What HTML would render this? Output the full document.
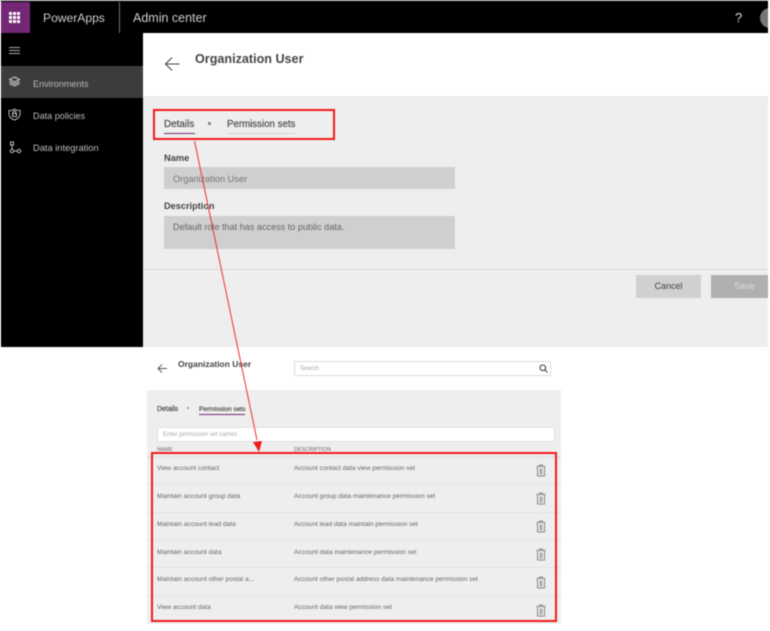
<!DOCTYPE html>
<html>
<head>
<meta charset="utf-8">
<style>
html,body{margin:0;padding:0;background:#fff;}
body{width:770px;height:631px;position:relative;overflow:hidden;font-family:"Liberation Sans",sans-serif;}
.a{position:absolute;white-space:nowrap;}
#wrap{position:absolute;left:0;top:0;width:770px;height:631px;filter:blur(0.5px);}
.row{position:absolute;left:157px;font-size:6.6px;color:#666;line-height:10px;}
.line{position:absolute;left:147px;width:414px;height:1px;background:#e2e2e2;}
.semi{-webkit-text-stroke:0.25px currentColor;}
</style>
</head>
<body>
<div id="wrap">
<!-- upper app -->
<div class="a" style="left:0;top:0;width:768px;height:1px;background:#aaa"></div>
<div class="a" style="left:1px;top:1px;width:767px;height:32px;background:#000"></div>
<div class="a" style="left:1px;top:2px;width:29px;height:31px;background:#742774"></div>
<svg class="a" style="left:9px;top:12px" width="12" height="12" fill="#fff">
<rect x="0" y="0" width="3" height="3"/><rect x="4" y="0" width="3" height="3"/><rect x="8" y="0" width="3" height="3"/>
<rect x="0" y="4" width="3" height="3"/><rect x="4" y="4" width="3" height="3"/><rect x="8" y="4" width="3" height="3"/>
<rect x="0" y="8" width="3" height="3"/><rect x="4" y="8" width="3" height="3"/><rect x="8" y="8" width="3" height="3"/>
</svg>
<div class="a" style="left:43px;top:10px;font-size:12.1px;line-height:16px;color:#ccc">PowerApps</div>
<div class="a" style="left:119px;top:2px;width:1px;height:31px;background:#777"></div>
<div class="a" style="left:133px;top:10px;font-size:12.5px;line-height:16px;color:#ccc">Admin center</div>
<div class="a" style="left:735px;top:10px;font-size:13px;line-height:16px;color:#ddd">?</div>
<div class="a" style="left:760px;top:8px;width:8px;height:20px;overflow:hidden"><div style="width:20px;height:20px;border-radius:50%;background:#777"></div></div>

<div class="a" style="left:1px;top:33px;width:142px;height:314px;background:#000"></div>
<div class="a" style="left:1px;top:66px;width:142px;height:32px;background:#3c3c3c"></div>
<svg class="a" style="left:9px;top:46px" width="12" height="9" stroke="#aaa" stroke-width="1" fill="none"><path d="M0 1.5H11M0 4.5H11M0 7.5H11"/></svg>
<svg class="a" style="left:8px;top:76px" width="13" height="12" stroke="#ccc" stroke-width="1" fill="none"><path d="M6.5 1L11.5 3.5L6.5 6L1.5 3.5Z"/><path d="M1.5 5.5L6.5 8L11.5 5.5"/><path d="M1.5 7.5L6.5 10L11.5 7.5"/></svg>
<svg class="a" style="left:8px;top:108px" width="13" height="13" stroke="#bbb" stroke-width="1" fill="none"><path d="M6.5 1C8 2 10 2.5 12 2.5V6C12 9 9.5 11 6.5 12C3.5 11 1 9 1 6V2.5C3 2.5 5 2 6.5 1Z"/><rect x="4.5" y="5.5" width="4" height="3"/><path d="M5 5.5V4.5A1.5 1.5 0 0 1 8 4.5V5.5"/></svg>
<svg class="a" style="left:9px;top:141px" width="13" height="13" stroke="#bbb" stroke-width="1" fill="none"><rect x="1.5" y="1" width="3" height="3"/><circle cx="3" cy="10" r="1.7"/><circle cx="10" cy="10" r="1.7"/><path d="M3 4V8.3M4.7 10H8.3"/></svg>
<div class="a" style="left:33px;top:78px;font-size:9.1px;line-height:12px;color:#bbb">Environments</div>
<div class="a" style="left:33px;top:110px;font-size:9.1px;line-height:12px;color:#bbb">Data policies</div>
<div class="a" style="left:33px;top:142px;font-size:9.3px;line-height:12px;color:#bbb">Data integration</div>

<div class="a" style="left:143px;top:33px;width:625px;height:63px;background:#fff"></div>
<div class="a" style="left:143px;top:96px;width:625px;height:251px;background:#eee"></div>
<svg class="a" style="left:164px;top:56px" width="17" height="16" stroke="#444" stroke-width="1.1" fill="none"><path d="M15.5 8H1.5M8 1.5L1.5 8L8 14.5"/></svg>
<div class="a" style="left:195px;top:50.5px;font-size:12.6px;line-height:16px;font-weight:bold;color:#444">Organization User</div>

<div class="a semi" style="left:164px;top:118px;font-size:9.9px;line-height:13px;color:#555">Details</div>
<div class="a" style="left:164px;top:133px;width:31px;height:1px;background:#742774"></div>
<div class="a" style="left:208px;top:122px;width:3px;height:3px;border-radius:50%;background:#777"></div>
<div class="a semi" style="left:227px;top:118px;font-size:9.7px;line-height:13px;color:#555">Permission sets</div>
<div class="a" style="left:227px;top:133px;width:68px;height:1px;background:#d4d4d4"></div>

<div class="a" style="left:164px;top:152px;font-size:9.3px;line-height:12px;font-weight:bold;color:#444">Name</div>
<div class="a" style="left:164px;top:167px;width:291px;height:22px;background:#cfcfcf"></div>
<div class="a" style="left:173px;top:173px;font-size:9.2px;line-height:12px;color:#777">Organization User</div>
<div class="a" style="left:164px;top:200px;font-size:9.2px;line-height:13px;font-weight:bold;color:#444">Description</div>
<div class="a" style="left:164px;top:216px;width:291px;height:33px;background:#cfcfcf"></div>
<div class="a" style="left:173px;top:221px;font-size:9.1px;line-height:12px;color:#666">Default role that has access to public data.</div>

<div class="a" style="left:143px;top:269px;width:625px;height:1px;background:#d8d8d8"></div>
<div class="a" style="left:636px;top:275px;width:65px;height:23px;background:#d0d0d0;color:#444;font-size:9px;line-height:23px;text-align:center">Cancel</div>
<div class="a" style="left:711px;top:275px;width:47px;height:23px;background:#b0b0b0;color:#ddd;font-size:9px;line-height:23px;text-align:center;padding-left:10px">Save</div>

<!-- lower app -->
<svg class="a" style="left:157px;top:363px" width="11" height="11" stroke="#555" stroke-width="0.9" fill="none"><path d="M10 5.5H1M5 1.5L1 5.5L5 9.5"/></svg>
<div class="a" style="left:178px;top:358px;font-size:8.5px;line-height:12px;font-weight:bold;color:#444">Organization User</div>
<div class="a" style="left:294px;top:361px;width:255px;height:13px;background:#fff;border:1px solid #ddd"></div>
<div class="a" style="left:300px;top:364px;font-size:6px;line-height:10px;color:#aaa">Search</div>
<svg class="a" style="left:539px;top:364px" width="9" height="9" stroke="#444" stroke-width="1.1" fill="none"><circle cx="3.8" cy="3.8" r="2.8"/><path d="M5.8 5.8L8.5 8.5"/></svg>

<div class="a" style="left:147px;top:390px;width:414px;height:234px;background:#eee"></div>
<div class="a semi" style="left:157px;top:405px;font-size:6.9px;line-height:10px;color:#555">Details</div>
<div class="a" style="left:187px;top:407px;width:2px;height:2px;border-radius:50%;background:#888"></div>
<div class="a semi" style="left:199px;top:405px;font-size:6.6px;line-height:10px;color:#555">Permission sets</div>
<div class="a" style="left:199px;top:414px;width:46px;height:1px;background:#742774"></div>
<div class="a" style="left:157px;top:427px;width:396px;height:13px;background:#fff;border:1px solid #e2e2e2"></div>
<div class="a" style="left:163px;top:430px;font-size:6px;line-height:10px;color:#aaa">Enter permission set names</div>
<div class="a" style="left:157px;top:446px;font-size:5.4px;line-height:9px;color:#666">NAME</div>
<div class="a" style="left:294px;top:446px;font-size:5.4px;line-height:9px;color:#666">DESCRIPTION</div>

<div class="line" style="top:456px;height:2px"></div>
<div class="line" style="top:484px"></div>
<div class="line" style="top:512px"></div>
<div class="line" style="top:540px"></div>
<div class="line" style="top:567px"></div>
<div class="line" style="top:595px"></div>

<div class="a row" style="top:464px">View account contact</div>
<div class="a row" style="top:464px;left:294px">Account contact data view permission set</div>
<div class="a row" style="top:492px">Maintain account group data</div>
<div class="a row" style="top:492px;left:294px">Account group data maintenance permission set</div>
<div class="a row" style="top:520px">Maintain account lead data</div>
<div class="a row" style="top:520px;left:294px">Account lead data maintain permission set</div>
<div class="a row" style="top:548px">Maintain account data</div>
<div class="a row" style="top:548px;left:294px">Account data maintenance permission set</div>
<div class="a row" style="top:575px">Maintain account other postal a...</div>
<div class="a row" style="top:575px;left:294px">Account other postal address data maintenance permission set</div>
<div class="a row" style="top:603px">View account data</div>
<div class="a row" style="top:603px;left:294px">Account data view permission set</div>

<svg width="0" height="0" style="position:absolute"><defs><g id="t" fill="none" stroke="#888" stroke-width="1"><path d="M1.5 2.5H8.5V12H1.5Z"/><path d="M0.5 2.5H9.5M3.5 2.5V1H6.5V2.5"/><rect x="3.5" y="4.5" width="3" height="6" fill="#aaa" stroke="none"/></g></defs></svg>
<svg class="a" style="left:535.5px;top:464px" width="10" height="13"><use href="#t"/></svg>
<svg class="a" style="left:535.5px;top:492px" width="10" height="13"><use href="#t"/></svg>
<svg class="a" style="left:535.5px;top:519.5px" width="10" height="13"><use href="#t"/></svg>
<svg class="a" style="left:535.5px;top:547.5px" width="10" height="13"><use href="#t"/></svg>
<svg class="a" style="left:535.5px;top:575.5px" width="10" height="13"><use href="#t"/></svg>
<svg class="a" style="left:535.5px;top:603.5px" width="10" height="13"><use href="#t"/></svg>

<!-- annotations -->
<div class="a" style="left:153px;top:109px;width:178px;height:27px;border:2px solid #f01a1a"></div>
<div class="a" style="left:151px;top:452px;width:402px;height:166px;border:2px solid #f01a1a"></div>
<svg class="a" style="left:0;top:0" width="770" height="631">
<path d="M194.5 141L257 440" stroke="#f03030" stroke-width="1" fill="none"/>
<path d="M253 442L262 441L259 452Z" fill="#f01a1a"/>
</svg>
</div>
</body>
</html>
